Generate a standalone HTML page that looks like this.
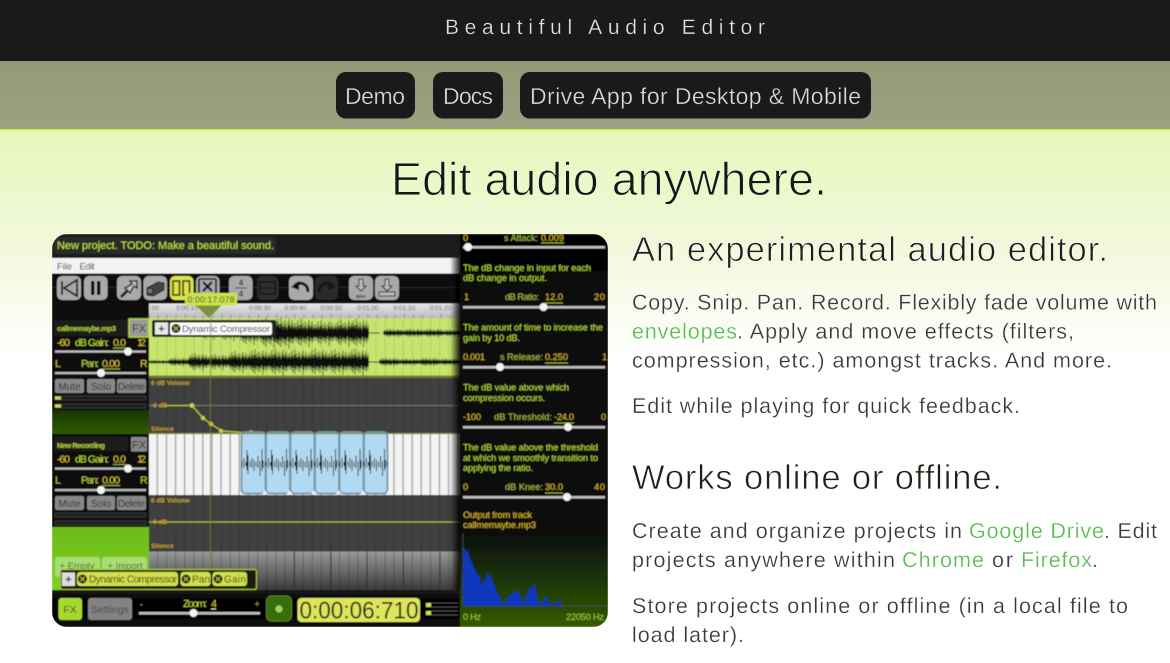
<!DOCTYPE html>
<html lang="en"><head><meta charset="utf-8"><title>Beautiful Audio Editor</title>
<style>
html,body{margin:0;padding:0;width:1170px;height:663px;overflow:hidden;background:#fff}
svg{display:block}
text{font-family:"Liberation Sans",Arial,sans-serif}
.p{font-size:21.5px;fill:#33383e;stroke:#fbfdf4;stroke-width:.28px;text-rendering:geometricPrecision}
.g{font-size:21.5px;fill:#55bb50;stroke:#fbfdf4;stroke-width:.28px;text-rendering:geometricPrecision}
.h{font-size:34.5px;fill:#1c1e20;stroke:#f8fbec;stroke-width:.75px;text-rendering:geometricPrecision}
.n{font-size:23px;fill:#dcdcdc;stroke:#1a1a1a;stroke-width:.35px;text-rendering:geometricPrecision}
.s{font-size:9.2px;fill:#b8e03c}
.o{font-size:9.2px;fill:#e0bc30}
.y{font-size:10.5px;fill:#d8c430}
.sl{font-size:10.5px;fill:#b8dc3c}
.b{font-size:10px;fill:#2c2c2c;text-anchor:middle}
.e{font-size:6.5px;fill:#c8a020;font-weight:bold}
.r{font-size:6.5px;fill:#555}
</style></head><body>
<svg width="1170" height="663" viewBox="0 0 1170 663" xmlns="http://www.w3.org/2000/svg">
<defs>
<linearGradient id="bg" x1="0" y1="0" x2="0" y2="1"><stop offset="0" stop-color="#e7f7ba"/><stop offset=".45" stop-color="#f0f8d8"/><stop offset="1" stop-color="#fff"/></linearGradient>
<linearGradient id="nav" x1="0" y1="0" x2="0" y2="1"><stop offset="0" stop-color="#929a75"/><stop offset="1" stop-color="#9ba181"/></linearGradient>
<linearGradient id="ruler" x1="0" y1="0" x2="0" y2="1"><stop offset="0" stop-color="#e8e8e8"/><stop offset="1" stop-color="#bbb"/></linearGradient>
<linearGradient id="sil" x1="0" y1="0" x2="0" y2="1"><stop offset="0" stop-color="#999"/><stop offset="1" stop-color="#3a3a3a"/></linearGradient>
<linearGradient id="dg" x1="0" y1="0" x2="0" y2="1"><stop offset="0" stop-color="#183400"/><stop offset="1" stop-color="#2f5c00"/></linearGradient>
<linearGradient id="bg2" x1="0" y1="0" x2="0" y2="1"><stop offset="0" stop-color="#6cbb1a"/><stop offset="1" stop-color="#7fd022"/></linearGradient>
<linearGradient id="spec" x1="0" y1="0" x2="0" y2="1"><stop offset="0" stop-color="#060606"/><stop offset=".75" stop-color="#0c0c0c"/><stop offset=".84" stop-color="#16280a"/><stop offset="1" stop-color="#335c02"/></linearGradient>
<linearGradient id="sh" x1="0" y1="0" x2="1" y2="0"><stop offset="0" stop-color="#000" stop-opacity="0"/><stop offset="1" stop-color="#000" stop-opacity=".95"/></linearGradient>
<linearGradient id="bot" x1="0" y1="0" x2="0" y2="1"><stop offset="0" stop-color="#1c1c1c"/><stop offset=".3" stop-color="#000"/><stop offset="1" stop-color="#0a0a0a"/></linearGradient>
<pattern id="st1" width="9.1" height="10" patternUnits="userSpaceOnUse" x="149"><rect width="9.1" height="10" fill="#c6e46e"/><rect x="8" width="1.1" height="10" fill="#b6d262"/></pattern>
<pattern id="st2" width="9.1" height="10" patternUnits="userSpaceOnUse" x="149"><rect width="9.1" height="10" fill="#404040"/><rect x="8" width="1.1" height="10" fill="#383838"/></pattern>
<pattern id="st3" width="9.1" height="10" patternUnits="userSpaceOnUse" x="149"><rect width="9.1" height="10" fill="#f4f4f4"/><rect x="7.6" width="1.5" height="10" fill="#a8a8a8"/></pattern>
<pattern id="st4" width="9.1" height="10" patternUnits="userSpaceOnUse" x="149"><rect width="9.1" height="10" fill="#fff" fill-opacity="0"/><rect x="8" width="1.1" height="10" fill="#000" fill-opacity=".2"/></pattern>
<clipPath id="cl"><rect x="52" y="234" width="556" height="393" rx="15"/></clipPath>
<filter id="bl" x="0" y="0" width="1" height="1"><feGaussianBlur stdDeviation=".45"/></filter>
<path id="w0" fill="none" stroke="#0a0a0a" stroke-width="1.4" d="M0-5V4M1-7V6M2-4V5M3-9V7M4-5V8M5-6V4M6-10V9M7-5V6M8-7V5M9-4V7M10-8V6M11-6V8M12-3V5M13-7V4M14-9V10M15-5V6M16-6V5M17-8V7M18-4V6M19-6V5"/>
<g id="w"><use href="#w0" transform="scale(1,1.5)" opacity=".38"/><use href="#w0" transform="scale(1,.85)"/></g>
<path id="c" fill="none" stroke="#1a1a1a" stroke-width="1" d="M0-3V3M2-6V4M4-2V2M5-14V6M6-9V10M8-3V3M10-6V4M12-4V7M14-2V3M16-8V4M18-3V12M20-15V7M21-4V4M23-2V2"/>
<g id="x"><circle r="4.500" fill="#1c1c1c"/><path d="M-2.200-2.200L2.200 2.200M2.200-2.200L-2.200 2.200" stroke="#a8c23a" stroke-width="1.100"/></g>
</defs>

<!-- page chrome -->
<rect width="1170" height="663" fill="#fff"/>
<rect y="130" width="1170" height="230" fill="url(#bg)"/>
<rect width="1170" height="61" fill="#1a1a1a"/>
<rect y="61" width="1170" height="68" fill="url(#nav)"/>
<rect y="129" width="1170" height="1.500" fill="#c4f050"/>
<text x="445" y="34" font-size="21" fill="#e2e2e2" stroke="#1a1a1a" stroke-width=".3" textLength="320" text-rendering="geometricPrecision">Beautiful Audio Editor</text>
<rect x="336" y="72" width="79" height="46.500" rx="10" fill="#1a1a1a"/>
<rect x="433" y="72" width="70" height="46.500" rx="10" fill="#1a1a1a"/>
<rect x="520" y="72" width="351" height="46.500" rx="10" fill="#1a1a1a"/>
<text class="n" x="345" y="104" textLength="60">Demo</text>
<text class="n" x="443" y="104" textLength="50">Docs</text>
<text class="n" x="530" y="104" textLength="331">Drive App for Desktop &amp; Mobile</text>
<text x="391" y="195" font-size="46.500" fill="#141618" stroke="#eef7cc" stroke-width="1" text-rendering="geometricPrecision" textLength="436">Edit audio anywhere.</text>

<text class="h" x="632" y="261" textLength="476">An experimental audio editor.</text>
<text class="p" x="632" y="309.500" textLength="525">Copy. Snip. Pan. Record. Flexibly fade volume with</text>
<text class="g" x="632" y="338.500" textLength="105">envelopes</text>
<text class="p" x="737" y="338.500" textLength="337">. Apply and move effects (filters,</text>
<text class="p" x="632" y="367.500" textLength="480">compression, etc.) amongst tracks. And more.</text>
<text class="p" x="632" y="413" textLength="388">Edit while playing for quick feedback.</text>
<text class="h" x="632" y="489" textLength="370">Works online or offline.</text>
<text class="p" x="632" y="538" textLength="330">Create and organize projects in</text>
<text class="g" x="969" y="538" textLength="135">Google Drive</text>
<text class="p" x="1104" y="538" textLength="53">. Edit</text>
<text class="p" x="632" y="567" textLength="263">projects anywhere within</text>
<text class="g" x="902" y="567" textLength="82">Chrome</text>
<text class="p" x="992" y="567" textLength="21">or</text>
<text class="g" x="1021" y="567" textLength="71">Firefox</text>
<text class="p" x="1092" y="567">.</text>
<text class="p" x="632" y="613" textLength="496">Store projects online or offline (in a local file to</text>
<text class="p" x="632" y="642" textLength="112">load later).</text>

<!-- app screenshot -->
<g clip-path="url(#cl)"><g filter="url(#bl)">
<rect x="52" y="234" width="556" height="393" fill="#0a0a0a"/>
<!-- status -->
<rect x="52" y="234" width="408" height="24" fill="#1a1a1a"/>
<rect x="54" y="237" width="222" height="17" rx="3" fill="#2a2a2a"/>
<text x="57" y="249" font-size="11" fill="#c0ea40" textLength="217">New project. TODO: Make a beautiful sound.</text>
<!-- menu -->
<rect x="52" y="258" width="408" height="15.500" fill="#f3f3f3"/>
<text x="57" y="269.500" font-size="9.500" fill="#444" textLength="15">File</text>
<text x="79.500" y="269.500" font-size="9.500" fill="#444" textLength="15">Edit</text>
<!-- toolbar -->
<rect x="52" y="273.500" width="408" height="30" fill="#0c0c0c"/>
<rect x="52" y="287" width="408" height="1" fill="#2a2a2a"/>
<g fill="#a9a9a9">
<rect x="57" y="276" width="24" height="24" rx="5"/><rect x="84" y="276" width="23.500" height="24" rx="5"/>
<rect x="117" y="276" width="24" height="24" rx="5"/><rect x="143.500" y="276" width="23.500" height="24" rx="5"/>
<rect x="196" y="276" width="23.500" height="24" rx="5"/><rect x="229" y="276" width="23.500" height="24" rx="5"/>
<rect x="289" y="276" width="24" height="24" rx="5"/><rect x="349" y="276" width="24" height="24" rx="5"/><rect x="375" y="276" width="24" height="24" rx="5"/>
</g>
<rect x="170" y="276" width="23.500" height="24" rx="5" fill="#dbe44a"/>
<rect x="257" y="276" width="21.500" height="24" rx="5" fill="#2e2e2e"/><rect x="315" y="276" width="23" height="24" rx="5" fill="#2a2a2a"/>
<!-- toolbar icons -->
<path d="M62 281V295M77 280L64 288L77 296Z" fill="none" stroke="#1a1a1a" stroke-width="1.800"/>
<rect x="91" y="281" width="3.400" height="14" fill="#111"/><rect x="97" y="281" width="3.400" height="14" fill="#111"/>
<path d="M121 296L127 290L125 288L132 284L130 281L137 281L137 288L134 286L130 293L128 291L122 297Z" fill="#bbb" stroke="#111" stroke-width="1.300"/>
<path d="M147 288L158 282L164 283L164 290L153 296L147 295Z" fill="#444" stroke="#222"/><circle cx="150" cy="291" r="3" fill="#777" stroke="#111"/>
<rect x="173" y="281" width="6.500" height="14" fill="none" stroke="#222" stroke-width="1.500"/><rect x="183" y="281" width="6.500" height="14" fill="none" stroke="#222" stroke-width="1.500"/>
<rect x="199" y="279" width="17" height="15" rx="1" fill="none" stroke="#111" stroke-width="1.600"/><path d="M203 282L212 291M212 282L203 291" stroke="#111" stroke-width="2.200"/>
<text x="241" y="285.500" font-size="8" font-weight="bold" fill="#3a3a3a" text-anchor="middle">4</text><path d="M235 288H247" stroke="#3a3a3a"/><text x="241" y="296.500" font-size="8" font-weight="bold" fill="#3a3a3a" text-anchor="middle">4</text>
<rect x="260" y="282" width="15" height="12" fill="none" stroke="#151515" stroke-width="1.500"/><path d="M262 288H273" stroke="#151515"/>
<path d="M308 292C308 284 301 281 295 285" fill="none" stroke="#111" stroke-width="2.800"/><path d="M291 287L299 281L299 290Z" fill="#111"/>
<path d="M319 292C319 284 326 281 332 285" fill="none" stroke="#181818" stroke-width="2.800"/><path d="M336 287L328 281L328 290Z" fill="#181818"/>
<path d="M359 279H363V286H366L361 291L356 286H359Z" fill="#bbb" stroke="#222"/><text x="361" y="298" font-size="4.500" fill="#222" text-anchor="middle" font-weight="bold">WAV</text>
<path d="M385 279H389V286H392L387 291L382 286H385Z" fill="#bbb" stroke="#222"/><rect x="379" y="292" width="16" height="4" fill="#bbb" stroke="#222"/>

<!-- ruler -->
<rect x="149" y="303.500" width="311" height="14.500" fill="url(#ruler)"/>
<path d="M149 314V318M158 315V318M167 315V318M176 315V318M185.500 314V318M194.500 315V318M203.500 315V318M213 315V318M222 314V318M231 315V318M240 315V318M249 315V318M258.500 314V318M267.500 315V318M276.500 315V318M286 315V318M295 314V318M304 315V318M313 315V318M322 315V318M331.500 314V318M340.500 315V318M349.500 315V318M359 315V318M368 314V318M377 315V318M386 315V318M395 315V318M404.500 314V318M413.500 315V318M422.500 315V318M432 315V318M441 314V318M450 315V318" stroke="#777" stroke-width=".7"/>
<text class="r" x="150" y="310">:00</text><text class="r" x="176" y="310">0:00:10</text><text class="r" x="249" y="310">0:00:30</text><text class="r" x="284.500" y="310">0:00:40</text><text class="r" x="320.500" y="310">0:00:50</text><text class="r" x="357" y="310">0:01:00</text><text class="r" x="393.500" y="310">0:01:10</text><text class="r" x="429.500" y="310">0:01:20</text>
<path d="M195 305H222L209 318Z" fill="#7e8f3e"/>
<rect x="185" y="293" width="52" height="12.500" rx="2" fill="#cde34a"/>
<text x="187.500" y="302.500" font-size="8.500" fill="#333" textLength="47">0:00:17:078</text>

<!-- track 1 -->
<rect x="52" y="318" width="97" height="92" fill="#111"/>
<rect x="54" y="320" width="74" height="16" rx="2" fill="#1e1e1e"/>
<text x="57" y="331" font-size="7.500" fill="#aed23a" font-weight="bold" textLength="59">callmemaybe.mp3</text>
<rect x="129" y="319" width="19.500" height="18" fill="#999" stroke="#a8d13c" stroke-width="1.600"/>
<text class="b" x="139" y="332" style="font-size:11px">FX</text>
<text class="y" x="57" y="346" textLength="13">-60</text>
<text class="sl" x="75" y="346" textLength="34">dB Gain:</text>
<text class="y" x="113" y="346" textLength="13">0.0</text><path d="M113 348H126" stroke="#8fb43a"/>
<text class="y" x="137" y="346" textLength="9">12</text>
<rect x="55" y="350.500" width="91" height="2.200" fill="#bbb"/><circle cx="128" cy="351.500" r="4" fill="#f4f4f4"/>
<text class="y" x="55" y="367">L</text>
<text class="sl" x="81" y="367" textLength="18">Pan:</text>
<text class="y" x="102" y="367" textLength="18">0.00</text><path d="M102 369H120" stroke="#8fb43a"/>
<text class="y" x="140" y="367">R</text>
<rect x="55" y="372" width="91" height="2.200" fill="#bbb"/><circle cx="101" cy="373" r="4" fill="#f4f4f4"/>
<g fill="#888"><rect x="55" y="379" width="29" height="14" rx="2"/><rect x="87" y="379" width="28" height="14" rx="2"/><rect x="117" y="379" width="29" height="14" rx="2"/></g>
<text class="b" x="69.500" y="390">Mute</text><text class="b" x="101" y="390">Solo</text><text class="b" x="131.500" y="390" textLength="27">Delete</text>
<rect x="55" y="396" width="91" height="4" fill="#1b1b1b" stroke="#444" stroke-width=".7"/><rect x="55" y="396.500" width="6" height="3" fill="#c6e04a"/>
<rect x="55" y="404" width="91" height="4" fill="#1b1b1b" stroke="#444" stroke-width=".7"/><rect x="55" y="404.500" width="6" height="3" fill="#c6e04a"/>
<rect x="52" y="410" width="97" height="24" fill="url(#dg)"/>

<rect x="149" y="318" width="311" height="60" fill="url(#st1)"/>
<rect x="149" y="375.500" width="311" height="2.500" fill="#6f7d32"/>
<!-- wave 1 -->
<use href="#w" transform="translate(160,329) scale(1,.4)"/><use href="#w" transform="translate(180,330) scale(1,.5)"/><use href="#w" transform="translate(200,331) scale(1,.6)"/><use href="#w" transform="translate(220,332) scale(1,.6)"/>
<use href="#w" transform="translate(240,333) scale(1,.8)"/><use href="#w" transform="translate(260,333) scale(1,1)"/><use href="#w" transform="translate(275,333) scale(1,1.050)"/><use href="#w" transform="translate(295,333) scale(1,.95)"/><use href="#w" transform="translate(315,333) scale(1,.85)"/><use href="#w" transform="translate(335,333) scale(1,.9)"/><use href="#w" transform="translate(351,333) scale(.9,.95)"/>
<path d="M368 333H380" stroke="#111" stroke-width="1"/><use href="#w" transform="translate(384,333) scale(1,.3)"/><use href="#w" transform="translate(404,333) scale(1,.3)"/><use href="#w" transform="translate(424,333) scale(1,.3)"/><use href="#w" transform="translate(444,333) scale(1,.25)"/>
<use href="#w" transform="translate(149,362) scale(1,.15)"/><use href="#w" transform="translate(169,362) scale(1,.3)"/><use href="#w" transform="translate(189,362) scale(1,.6)"/><use href="#w" transform="translate(209,362) scale(1,.55)"/><use href="#w" transform="translate(229,362) scale(1,.75)"/><use href="#w" transform="translate(249,362) scale(1,.85)"/><use href="#w" transform="translate(269,362) scale(1,.9)"/><use href="#w" transform="translate(289,362) scale(1,.85)"/><use href="#w" transform="translate(309,362) scale(1,.9)"/><use href="#w" transform="translate(329,362) scale(1,.85)"/><use href="#w" transform="translate(349,362) scale(1,.9)"/>
<path d="M368 362H380" stroke="#111" stroke-width="1"/><use href="#w" transform="translate(380,362) scale(1,.3)"/><use href="#w" transform="translate(400,362) scale(1,.25)"/><use href="#w" transform="translate(420,362) scale(1,.3)"/><use href="#w" transform="translate(440,362) scale(1,.25)"/>
<!-- chip -->
<rect x="152" y="320" width="124" height="17" rx="2" fill="#222"/>
<rect x="155" y="322.500" width="13" height="12" fill="#e8e8e8"/><text x="161.500" y="332.500" font-size="11" fill="#222" text-anchor="middle" font-weight="bold">+</text>
<rect x="170" y="322.500" width="102" height="12.500" rx="2" fill="#fbfbfb"/>
<use href="#x" x="176" y="328.500"/>
<text x="182" y="332" font-size="9.500" fill="#333" textLength="88">Dynamic Compressor</text>

<!-- envelope 1 -->
<rect x="149" y="378" width="311" height="55.500" fill="url(#st2)"/>
<path d="M149 405.500H460" stroke="#8a8a8a" stroke-width=".8"/>
<text class="e" x="151" y="385">6 dB Volume</text><text class="e" x="151" y="407.500">-0 dB</text><text class="e" x="151" y="431">Silence</text>
<path d="M165 405.500H192L203 418L211 424L222 431L250 433" fill="none" stroke="#b4c83a" stroke-width="1.300"/>
<g fill="#d4c83a"><circle cx="192" cy="405.500" r="2.400"/><circle cx="203" cy="418" r="2.200"/><circle cx="211" cy="424" r="2.200"/><circle cx="221" cy="431" r="2.200"/><circle cx="251" cy="432.500" r="2.200"/></g>

<!-- track 2 -->
<rect x="52" y="434" width="97" height="93" fill="#111"/>
<rect x="54" y="437" width="74" height="14" rx="2" fill="#1e1e1e"/>
<text x="57" y="448" font-size="7.500" fill="#aed23a" font-weight="bold" textLength="48">New Recording</text>
<rect x="131" y="437" width="16" height="14.500" rx="1" fill="#888"/>
<text class="b" x="139" y="448.500" style="font-size:11px">FX</text>
<text class="y" x="57" y="462.500" textLength="13">-60</text>
<text class="sl" x="75" y="462.500" textLength="34">dB Gain:</text>
<text class="y" x="113" y="462.500" textLength="13">0.0</text><path d="M113 464.500H126" stroke="#8fb43a"/>
<text class="y" x="137" y="462.500" textLength="9">12</text>
<rect x="55" y="467.500" width="91" height="2.200" fill="#bbb"/><circle cx="128" cy="468.500" r="4" fill="#f4f4f4"/>
<text class="y" x="55" y="483.500">L</text>
<text class="sl" x="81" y="483.500" textLength="18">Pan:</text>
<text class="y" x="102" y="483.500" textLength="18">0.00</text><path d="M102 485.500H120" stroke="#8fb43a"/>
<text class="y" x="140" y="483.500">R</text>
<rect x="55" y="489" width="91" height="2.200" fill="#bbb"/><circle cx="101" cy="490" r="4" fill="#f4f4f4"/>
<g fill="#888"><rect x="55" y="496" width="29" height="14" rx="2"/><rect x="87" y="496" width="28" height="14" rx="2"/><rect x="117" y="496" width="29" height="14" rx="2"/></g>
<text class="b" x="69.500" y="507">Mute</text><text class="b" x="101" y="507">Solo</text><text class="b" x="131.500" y="507" textLength="27">Delete</text>
<rect x="55" y="513" width="91" height="4" fill="#1b1b1b" stroke="#444" stroke-width=".7"/>
<rect x="55" y="521" width="91" height="4" fill="#1b1b1b" stroke="#444" stroke-width=".7"/>
<rect x="52" y="527" width="97" height="63" fill="url(#bg2)"/>
<rect x="55" y="557" width="45" height="20" rx="3" fill="#a8dc74"/><rect x="102" y="557" width="45" height="20" rx="3" fill="#a8dc74"/>
<text x="77" y="569" font-size="9.500" fill="#4a6a2a" text-anchor="middle">+ Empty</text><text x="125" y="569" font-size="9.500" fill="#4a6a2a" text-anchor="middle">+ Import</text>

<rect x="149" y="434" width="311" height="61" fill="url(#st3)"/>
<g fill="#b2d9f2" stroke="#6f95a6" stroke-width="1.800">
<rect x="241.500" y="432" width="24" height="61.500" rx="4"/><rect x="266" y="432" width="24" height="61.500" rx="4"/><rect x="290.500" y="432" width="24" height="61.500" rx="4"/><rect x="315" y="432" width="24" height="61.500" rx="4"/><rect x="339.500" y="432" width="24" height="61.500" rx="4"/><rect x="364" y="432" width="23.500" height="61.500" rx="4"/>
</g>
<use href="#c" transform="translate(242,464)"/><use href="#c" transform="translate(266.500,464)"/><use href="#c" transform="translate(291,464)"/><use href="#c" transform="translate(315.500,464)"/><use href="#c" transform="translate(340,464)"/><use href="#c" transform="translate(364.500,464)"/>
<path d="M262 494L265 490L268 494ZM286.500 494L289.500 490L292.500 494ZM311 494L314 490L317 494ZM335.500 494L338.500 490L341.500 494ZM360 494L363 490L366 494Z" fill="#eee"/>

<rect x="149" y="495" width="311" height="56.500" fill="url(#st2)"/>
<path d="M149 522H460" stroke="#a4bc3c" stroke-width="1.200"/>
<text class="e" x="151" y="502.500">6 dB Volume</text><text class="e" x="151" y="524">-0 dB</text><text class="e" x="151" y="548">Silence</text>
<rect x="149" y="551.500" width="311" height="38.500" fill="url(#sil)"/>
<rect x="149" y="551.500" width="311" height="38.500" fill="url(#st4)"/>
<path d="M294.500 551V590M331 551V590M367 551V590M403.500 551V590M440 551V590" stroke="#333" stroke-width="1"/>
<path d="M210.500 318V590" stroke="#6f8a2c" stroke-width=".9" stroke-opacity=".8"/>
<path d="M149 433.500H460" stroke="#7f8f36" stroke-width="1.200"/>

<!-- fx bar -->
<rect x="60.500" y="569.500" width="196" height="20" rx="2" fill="#1b1b10" stroke="#a8c83a" stroke-width="1.200"/>
<rect x="62" y="572.500" width="13" height="13.500" fill="#ddd"/><text x="68.500" y="583" font-size="11" fill="#222" text-anchor="middle" font-weight="bold">+</text>
<g fill="#d2df50"><rect x="77" y="572" width="101" height="14" rx="3"/><rect x="180.500" y="572" width="30" height="14" rx="3"/><rect x="212.500" y="572" width="34.500" height="14" rx="3"/></g>
<use href="#x" x="82.500" y="579"/><use href="#x" x="186" y="579"/><use href="#x" x="218" y="579"/>
<text x="89" y="582.500" font-size="10" fill="#3a3a10" textLength="88">Dynamic Compressor</text>
<text x="192" y="582.500" font-size="10" fill="#3a3a10" textLength="18">Pan</text>
<text x="224" y="582.500" font-size="10" fill="#3a3a10" textLength="22">Gain</text>

<!-- shadow + right panel -->
<rect x="450" y="258" width="11" height="332" fill="url(#sh)"/>
<rect x="460" y="234" width="148" height="393" fill="url(#spec)"/>

<rect x="52" y="590" width="408" height="37" fill="url(#bot)"/>
<rect x="58.500" y="598" width="23.500" height="22" rx="3" fill="#a6d92f"/>
<text x="70" y="613" font-size="10.500" fill="#444" text-anchor="middle">FX</text>
<rect x="88" y="598" width="44" height="22" rx="3" fill="#838383"/>
<text x="110" y="613" font-size="10.500" fill="#444" text-anchor="middle">Settings</text>
<text x="140" y="607" font-size="8" fill="#b4dc3c">-</text>
<text class="sl" x="183" y="607" textLength="24">Zoom:</text>
<text class="y" x="211" y="607">4</text><path d="M211 609H216" stroke="#ddd"/>
<text x="254.500" y="607" font-size="9" fill="#b4a030">+</text>
<rect x="139" y="612" width="121" height="2.500" fill="#bbb"/><circle cx="193.500" cy="613" r="4" fill="#f4f4f4"/>
<rect x="266.500" y="596" width="25" height="25" rx="5" fill="#386c10" stroke="#4e8a1a"/><circle cx="279" cy="609" r="3.600" fill="#92dc58"/>
<rect x="297.500" y="598" width="122.500" height="24" rx="4" fill="#dde55a"/>
<text x="299.500" y="618.500" font-size="24" fill="#222" textLength="119" lengthAdjust="spacingAndGlyphs">0:00:06:710</text>
<rect x="426" y="603" width="5" height="4" fill="#cde34a"/><rect x="426" y="611" width="5" height="4" fill="#cde34a"/>
<path d="M431 603H458M431 607H458M431 611H458M431 615H458" stroke="#666" stroke-width=".8"/>

<!-- right panel content -->
<text class="o" x="463" y="241">0</text>
<text class="s" style="fill:#a6c048" x="504" y="241" textLength="34">s Attack:</text><text class="o" x="541" y="241" textLength="23">0.009</text><path d="M541 243H564" stroke="#8fb43a"/>
<rect x="463" y="246" width="142" height="2.500" fill="#bbb"/><circle cx="468" cy="247" r="4" fill="#f4f4f4"/>
<text class="s" x="463" y="271" textLength="128">The dB change in input for each</text>
<text class="s" x="463" y="281" textLength="84">dB change in output.</text>
<text class="o" x="464" y="300">1</text>
<text class="s" style="fill:#a6c048" x="505" y="300" textLength="34">dB Ratio:</text><text class="o" x="545" y="300" textLength="18">12.0</text><path d="M545 303H563" stroke="#8fb43a"/>
<text class="o" x="594" y="300" textLength="11">20</text>
<rect x="463" y="306" width="142" height="2.500" fill="#bbb"/><circle cx="543.500" cy="307" r="4" fill="#f4f4f4"/>
<text class="s" x="463" y="330.500" textLength="140">The amount of time to increase the</text>
<text class="s" x="463" y="341" textLength="57">gain by 10 dB.</text>
<text class="o" x="463" y="360" textLength="22">0.001</text>
<text class="s" style="fill:#a6c048" x="500" y="360" textLength="43">s Release:</text><text class="o" x="545" y="360" textLength="23">0.250</text><path d="M545 363H568" stroke="#8fb43a"/>
<text class="o" x="602" y="360">1</text>
<rect x="463" y="366" width="142" height="2.500" fill="#bbb"/><circle cx="500" cy="367" r="4" fill="#f4f4f4"/>
<text class="s" x="463" y="390.500" textLength="106">The dB value above which</text>
<text class="s" x="463" y="401" textLength="82">compression occurs.</text>
<text class="o" x="463" y="420" textLength="18">-100</text>
<text class="s" style="fill:#a6c048" x="494" y="420" textLength="58">dB Threshold:</text><text class="o" x="554" y="420" textLength="20">-24.0</text><path d="M554 423H574" stroke="#8fb43a"/>
<text class="o" x="601" y="420">0</text>
<rect x="463" y="426" width="142" height="2.500" fill="#bbb"/><circle cx="568" cy="427" r="4" fill="#f4f4f4"/>
<text class="s" x="463" y="450.500" textLength="135">The dB value above the threshold</text>
<text class="s" x="463" y="461" textLength="135">at which we smoothly transition to</text>
<text class="s" x="463" y="471" textLength="70">applying the ratio.</text>
<text class="o" x="463" y="490">0</text>
<text class="s" style="fill:#a6c048" x="505" y="490" textLength="38">dB Knee:</text><text class="o" x="545" y="490" textLength="18">30.0</text><path d="M545 493H563" stroke="#8fb43a"/>
<text class="o" x="594" y="490" textLength="11">40</text>
<rect x="463" y="496" width="142" height="2.500" fill="#bbb"/><circle cx="567" cy="497" r="4" fill="#f4f4f4"/>
<text class="o" x="463" y="518" textLength="69">Output from track</text>
<text class="o" x="463" y="528" textLength="73">callmemaybe.mp3</text>
<path d="M463 533V606H606" fill="none" stroke="#444" stroke-width=".9"/>
<path d="M463 606V547L465 549L466 552L468 550L469 556L470 557L471 562L472 561L473 566L475 569L476 573L478 574L479 578L480 577L481 585L483 583L484 579L486 579L487 574L488 573L489 577L490 575L492 579L493 583L495 586L496 590L498 594L500 598L502 601L504 605L506 600L508 598L510 594L511 596L513 592L514 593L516 591L518 590L520 595L521 599L522 597L524 603L525 605L526 596L527 593L529 588L530 587L532 590L533 589L534 584L535 583L536 592L538 598L540 605L542 603L544 599L545 598L547 597L548 600L550 605L553 605L555 602L557 603L558 604L560 598L562 606Z" fill="#0a38bc"/>
<text class="s" style="fill:#a8c840" x="463" y="620" textLength="18">0 Hz</text>
<text class="s" style="fill:#a8c840" x="566" y="620" textLength="38">22050 Hz</text>
</g></g>
</svg>
</body></html>
